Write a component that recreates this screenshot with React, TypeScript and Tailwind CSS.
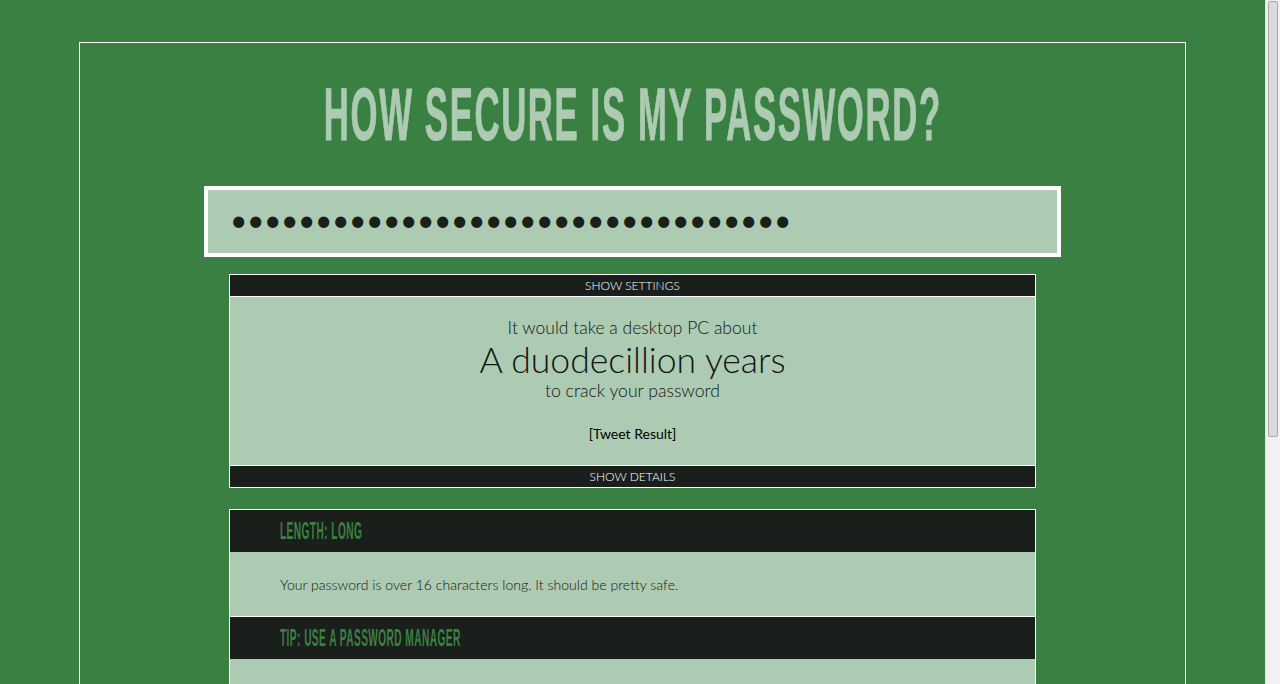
import React from 'react';

const lato = { fontFamily: 'Lato, sans-serif' };

const DetailHeader = ({ title }: { title: string }) => (
  <div className="h-[44px] -mb-px border border-white bg-[#1a1f1b] pl-[50px] flex items-center">
    <h3 className="font-['Liberation_Sans',sans-serif] font-bold text-[23px] leading-none text-[#3a8043] origin-left scale-x-[0.44] whitespace-nowrap tracking-[1px]">
      {title}
    </h3>
  </div>
);

const ToggleBar = ({ label }: { label: string }) => (
  <div className="h-[23px] border border-white bg-[#1a1f1b] text-white text-[12px] leading-[21px] text-center font-light">
    {label}
  </div>
);

export default function App() {
  return (
    <div className="h-[684px] overflow-hidden flex bg-[#3a8043]" style={lato}>
      <main className="flex-1 min-w-0 overflow-hidden pt-[42px]">
        <div className="mx-[79px] h-[800px] border border-white">
          <h1 className="h-[143px] flex justify-center pt-[29px] text-[#adcbb2]">
            <span className="font-['Liberation_Sans',sans-serif] font-bold text-[74px] leading-[86px] whitespace-nowrap tracking-[3.5px] scale-x-[0.469] [-webkit-text-stroke:1px_#adcbb2]">
              HOW SECURE IS MY PASSWORD?
            </span>
          </h1>

          <div className="mx-[124px] h-[71px] border-4 border-white bg-[#adcbb2]">
            <input
              type="password"
              readOnly
              value="correcthorsebatterystaplegreenlaw"
              className="w-full h-full pl-[22px] pr-6 pb-[6px] bg-transparent outline-none text-[#1a1f1b] text-[30px] tracking-[-0.4px]"
              style={lato}
            />
          </div>

          <section className="mx-[149px] mt-[17px]">
            <ToggleBar label="SHOW SETTINGS" />
            <div className="h-[168px] bg-[#adcbb2] border-x border-white text-center text-[#111512] font-light pt-[20px]">
              <p className="text-[17.5px] leading-[22px]">It would take a desktop PC about</p>
              <p className="text-[35.6px] leading-[42px]">A duodecillion years</p>
              <p className="text-[17.6px] leading-[20px]">to crack your password</p>
              <p className="mt-[23px] text-[14px] leading-[20px] font-normal text-black">[Tweet Result]</p>
            </div>
            <ToggleBar label="SHOW DETAILS" />
          </section>

          <section className="mx-[149px] mt-[21px]">
            <DetailHeader title="LENGTH: LONG" />
            <div className="h-[65px] -mb-px bg-[#adcbb2] border-x border-white pl-[50px] flex items-center text-[14px] tracking-[0.04px] text-[#111512] font-light">
              Your password is over 16 characters long. It should be pretty safe.
            </div>
            <DetailHeader title="TIP: USE A PASSWORD MANAGER" />
            <div className="h-[100px] bg-[#adcbb2] border-x border-white" />
          </section>
        </div>
      </main>

      {/* scrollbar */}
      <aside className="w-[15px] shrink-0 bg-[#f1f1f1] border-l border-[#e4e4e4] pt-[1px] px-[2px]">
        <div className="h-[436px] w-full rounded-[2px] bg-[#dadada] border border-[#a9a9a9]" />
      </aside>
    </div>
  );
}
